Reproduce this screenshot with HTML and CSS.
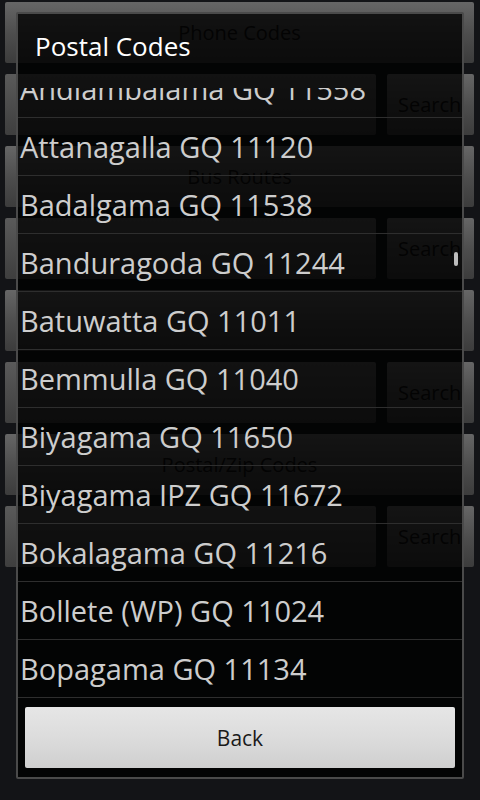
FILE: index.html
```html
<!DOCTYPE html>
<html>
<head>
<meta charset="utf-8">
<link rel="stylesheet" href="styles.css">
</head>
<body>
<div class="screen">
  <div class="bg-btn">Phone Codes</div>
  <div class="search-row"><div class="bg-input"></div><div class="bg-btn search">Search</div></div>
  <div class="bg-btn">Bus Routes</div>
  <div class="search-row"><div class="bg-input"></div><div class="bg-btn search">Search</div></div>
  <div class="bg-btn"></div>
  <div class="search-row"><div class="bg-input"></div><div class="bg-btn search">Search</div></div>
  <div class="bg-btn">Postal/Zip Codes</div>
  <div class="search-row"><div class="bg-input"></div><div class="bg-btn search">Search</div></div>
</div>

<div class="dialog">
  <div class="dialog-title">Postal Codes</div>
  <div class="list-wrap">
    <ul class="list">
      <li>Andiambalama GQ 11558</li>
      <li>Attanagalla GQ 11120</li>
      <li>Badalgama GQ 11538</li>
      <li>Banduragoda GQ 11244</li>
      <li>Batuwatta GQ 11011</li>
      <li>Bemmulla GQ 11040</li>
      <li>Biyagama GQ 11650</li>
      <li>Biyagama IPZ GQ 11672</li>
      <li>Bokalagama GQ 11216</li>
      <li>Bollete (WP) GQ 11024</li>
      <li>Bopagama GQ 11134</li>
    </ul>
    <div class="scrollbar"></div>
  </div>
  <div class="dialog-actions">
    <div class="back-btn">Back</div>
  </div>
</div>
</body>
</html>
```
FILE: styles.css
```css
html, body {
  margin: 0;
  padding: 0;
}
body {
  width: 480px;
  height: 800px;
  overflow: hidden;
  background: #131417;
  font-family: "Open Sans", "Noto Sans", sans-serif;
  position: relative;
}
.screen {
  display: flex;
  flex-direction: column;
  gap: 11px;
  padding: 2px 6px 0 5px;
}
.bg-btn {
  height: 61px;
  border-radius: 2px;
  background: linear-gradient(#666 0%, #4e4e4e 50%, #3c3c3c 100%);
  color: #111;
  font-size: 20px;
  display: flex;
  align-items: center;
  justify-content: center;
}
.search-row {
  display: flex;
  gap: 11px;
  height: 61px;
}
.bg-input {
  flex: 1;
  border-radius: 2px;
  background: linear-gradient(#5a5a5a, #3e3e3e);
}
.search {
  width: 87px;
  justify-content: flex-start;
  padding-left: 11px;
  box-sizing: border-box;
}

.dialog {
  position: absolute;
  left: 16px;
  top: 12px;
  width: 448px;
  height: 767px;
  box-sizing: border-box;
  border: 2px solid #4a4a4a;
  border-radius: 2px;
  background: rgba(0, 0, 0, 0.8);
  display: flex;
  flex-direction: column;
}
.dialog-title {
  height: 74px;
  flex: none;
  display: flex;
  align-items: center;
  padding-left: 17px;
  padding-bottom: 10px;
  box-sizing: border-box;
  color: #fff;
  font-size: 26px;
}
.list-wrap {
  position: relative;
  height: 611px;
  flex: none;
  overflow: hidden;
}
.list {
  list-style: none;
  margin: -28px 0 0 0;
  padding: 0;
}
.list li {
  height: 57px;
  border-bottom: 1px solid #2e2e2e;
  display: flex;
  align-items: center;
  padding-left: 2px;
  color: #cdcdcd;
  font-size: 29px;
  white-space: nowrap;
}
.scrollbar {
  position: absolute;
  right: 4px;
  top: 164px;
  width: 4px;
  height: 14px;
  border-radius: 2px;
  background: #bdbdbd;
}
.dialog-actions {
  flex: 1;
  padding: 8px 7px 9px 7px;
  display: flex;
}
.back-btn {
  flex: 1;
  border-radius: 2px;
  background: linear-gradient(#e6e6e6 0%, #dcdcdc 50%, #cfcfcf 100%);
  color: #1a1a1a;
  font-size: 21px;
  display: flex;
  align-items: center;
  justify-content: center;
}
```
